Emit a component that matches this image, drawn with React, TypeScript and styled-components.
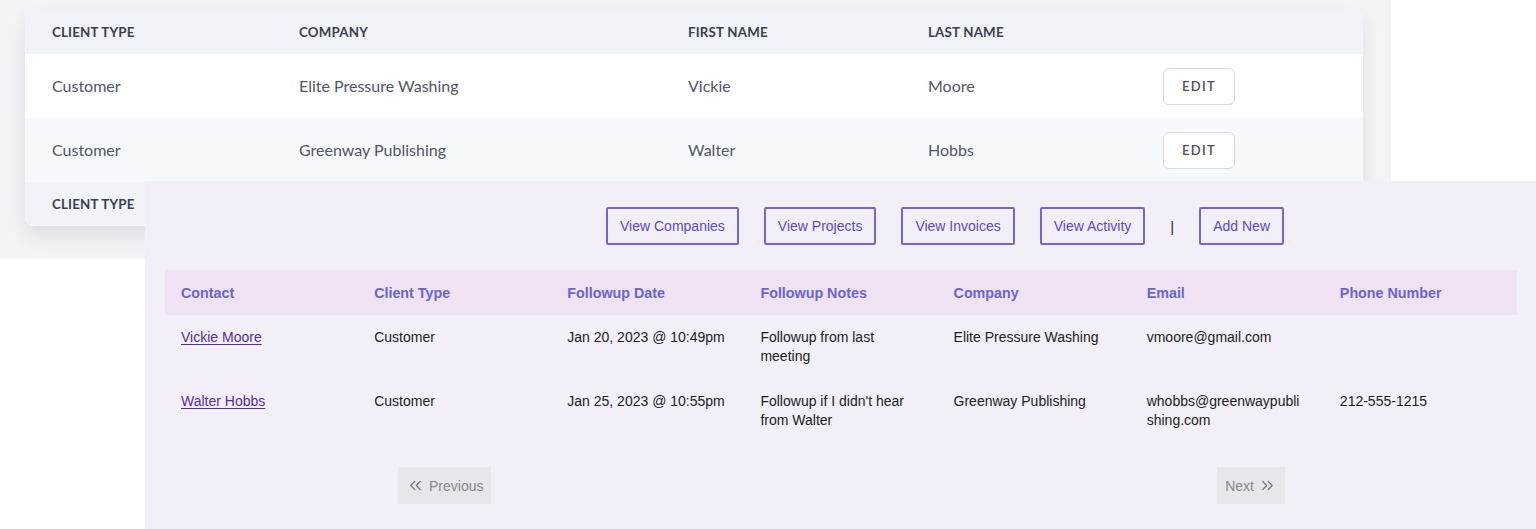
import React from "react";
import styled, { createGlobalStyle } from "styled-components";
import { ChevronsLeft, ChevronsRight } from "lucide-react";

const GlobalStyle = createGlobalStyle`
  html, body {
    margin: 0;
    padding: 0;
    background: #ffffff;
  }
  * {
    box-sizing: border-box;
  }
`;

const Canvas = styled.div`
  position: relative;
  width: 1536px;
  height: 529px;
  overflow: hidden;
  background: #ffffff;
`;

/* back screenshot: the admin clients table */
const BackShot = styled.div`
  position: absolute;
  left: 0;
  top: 0;
  width: 1391px;
  height: 258px;
  background: #f3f4f6;
  padding: 10px 28px 0 25px;
  font-family: "Lato", "Open Sans", sans-serif;
`;

const Card = styled.div`
  border-radius: 8px;
  overflow: hidden;
  background: #ffffff;
  box-shadow: 0 10px 18px rgba(30, 40, 60, 0.1);
`;

const CardRow = styled.div<{ $tone: "head" | "white" | "alt" }>`
  display: grid;
  grid-template-columns: 247px 389px 240px 235px 1fr;
  align-items: center;
  padding-left: 27px;
  height: ${(p) => (p.$tone === "head" ? "44px" : "64px")};
  background: ${(p) =>
    p.$tone === "head" ? "#f0f3f8" : p.$tone === "alt" ? "#f6f9fc" : "#ffffff"};
`;

const HeadCell = styled.div`
  font-size: 13.3px;
  font-weight: 700;
  color: #3a4152;
  letter-spacing: 0.2px;
  text-transform: uppercase;
`;

const BodyCell = styled.div`
  font-size: 16px;
  color: #505767;
  padding-bottom: 1px;
`;

const EditButton = styled.button`
  width: 72px;
  height: 37px;
  border: 1px solid #d6d9df;
  border-radius: 6px;
  background: #ffffff;
  font-family: "Lato", sans-serif;
  font-size: 13px;
  font-weight: 600;
  letter-spacing: 1.3px;
  color: #4a5061;
  cursor: pointer;
`;

/* front screenshot: the followups view */
const FrontShot = styled.div`
  position: absolute;
  left: 145px;
  top: 181px;
  right: 0;
  bottom: 0;
  background: #f2eff8;
  font-family: "Liberation Sans", Arial, sans-serif;
  font-size: 14px;
  color: #222222;
`;

const Toolbar = styled.div`
  display: flex;
  justify-content: flex-end;
  align-items: center;
  gap: 25px;
  padding: 26px 252px 0 0;
`;

const NavButton = styled.button`
  height: 38px;
  padding: 0 12px;
  border: 2px solid #7666c9;
  border-radius: 2px;
  background: transparent;
  font-family: "Liberation Sans", Arial, sans-serif;
  font-size: 14px;
  color: #5a4cbc;
  cursor: pointer;
`;

const Divider = styled.span`
  font-size: 15px;
  color: #333333;
`;

const Table = styled.div`
  margin: 25px 19px 0 20px;
`;

const Row = styled.div<{ $head?: boolean }>`
  display: grid;
  grid-template-columns: repeat(7, 1fr);
  align-items: ${(p) => (p.$head ? "center" : "start")};
  height: ${(p) => (p.$head ? "45px" : "auto")};
  padding: ${(p) => (p.$head ? "0" : "13px 0")};
  background: ${(p) => (p.$head ? "#efe2f3" : "transparent")};
`;

const Th = styled.div`
  padding: 0 16px;
  font-size: 14.3px;
  font-weight: 700;
  color: #6a66c9;
`;

const Td = styled.div<{ $breakAll?: boolean }>`
  padding: ${(p) => (p.$breakAll ? "0 18px 0 16px" : "0 16px")};
  line-height: 19px;
  word-break: ${(p) => (p.$breakAll ? "break-all" : "normal")};
`;

const ContactLink = styled.a`
  color: #5a2b99;
  text-decoration: underline;
  text-underline-offset: 2px;
`;

const Pager = styled.div`
  display: flex;
  justify-content: space-between;
  margin-top: 24px;
  padding: 0 251px 0 253px;
`;

const PageButton = styled.button`
  display: flex;
  align-items: center;
  gap: 4px;
  height: 37px;
  padding: 0 8px;
  border: none;
  background: #e7e6ea;
  font-family: "Liberation Sans", Arial, sans-serif;
  font-size: 14px;
  color: #88888c;

  svg {
    color: #77777b;
  }
`;

const clients = [
  { type: "Customer", company: "Elite Pressure Washing", first: "Vickie", last: "Moore" },
  { type: "Customer", company: "Greenway Publishing", first: "Walter", last: "Hobbs" },
];

const followups = [
  {
    contact: "Vickie Moore",
    type: "Customer",
    date: "Jan 20, 2023 @ 10:49pm",
    notes: "Followup from last meeting",
    company: "Elite Pressure Washing",
    email: "vmoore@gmail.com",
    phone: "",
  },
  {
    contact: "Walter Hobbs",
    type: "Customer",
    date: "Jan 25, 2023 @ 10:55pm",
    notes: "Followup if I didn't hear from Walter",
    company: "Greenway Publishing",
    email: "whobbs@greenwaypublishing.com",
    phone: "212-555-1215",
  },
];

const columns = [
  "Contact",
  "Client Type",
  "Followup Date",
  "Followup Notes",
  "Company",
  "Email",
  "Phone Number",
];

const App: React.FC = () => {
  return (
    <>
      <GlobalStyle />
      <Canvas>
        <BackShot>
          <Card>
            <CardRow $tone="head">
              <HeadCell>Client Type</HeadCell>
              <HeadCell>Company</HeadCell>
              <HeadCell>First Name</HeadCell>
              <HeadCell>Last Name</HeadCell>
              <HeadCell />
            </CardRow>
            {clients.map((c, i) => (
              <CardRow key={c.last} $tone={i % 2 === 0 ? "white" : "alt"}>
                <BodyCell>{c.type}</BodyCell>
                <BodyCell>{c.company}</BodyCell>
                <BodyCell>{c.first}</BodyCell>
                <BodyCell>{c.last}</BodyCell>
                <div>
                  <EditButton>EDIT</EditButton>
                </div>
              </CardRow>
            ))}
            <CardRow $tone="head">
              <HeadCell>Client Type</HeadCell>
              <HeadCell>Company</HeadCell>
              <HeadCell>First Name</HeadCell>
              <HeadCell>Last Name</HeadCell>
              <HeadCell />
            </CardRow>
          </Card>
        </BackShot>

        <FrontShot>
          <Toolbar>
            <NavButton>View Companies</NavButton>
            <NavButton>View Projects</NavButton>
            <NavButton>View Invoices</NavButton>
            <NavButton>View Activity</NavButton>
            <Divider>|</Divider>
            <NavButton>Add New</NavButton>
          </Toolbar>

          <Table>
            <Row $head>
              {columns.map((col) => (
                <Th key={col}>{col}</Th>
              ))}
            </Row>
            {followups.map((f) => (
              <Row key={f.contact}>
                <Td>
                  <ContactLink href="#">{f.contact}</ContactLink>
                </Td>
                <Td>{f.type}</Td>
                <Td>{f.date}</Td>
                <Td>{f.notes}</Td>
                <Td>{f.company}</Td>
                <Td $breakAll>{f.email}</Td>
                <Td>{f.phone}</Td>
              </Row>
            ))}
          </Table>

          <Pager>
            <PageButton>
              <ChevronsLeft size={19} strokeWidth={1.6} />
              Previous
            </PageButton>
            <PageButton>
              Next
              <ChevronsRight size={19} strokeWidth={1.6} />
            </PageButton>
          </Pager>
        </FrontShot>
      </Canvas>
    </>
  );
};

export default App;
